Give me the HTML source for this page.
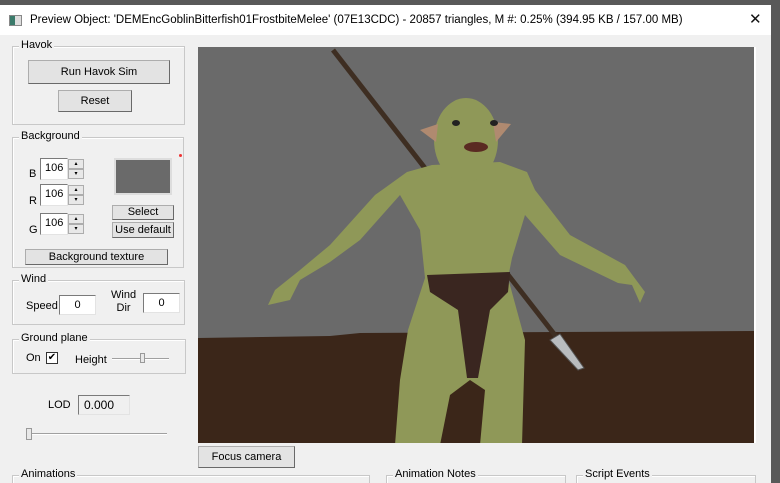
<!DOCTYPE html>
<html style="width:780px;height:483px;overflow:hidden"><head><style>
*{margin:0;padding:0;box-sizing:border-box}
body{width:780px;height:483px;background:#595959;overflow:hidden;font-family:"Liberation Sans",Tahoma,sans-serif;font-size:11px;color:#000;position:relative}
.win{position:absolute;left:0;top:5px;width:771px;height:478px;background:#f0f0f0;overflow:hidden}
.title{position:absolute;left:0;top:0;width:771px;height:30px;background:#fff;font-size:11.5px}
.title span{position:absolute;left:30px;top:9px;white-space:nowrap}
.ico{position:absolute;left:9px;top:10px;width:13px;height:11px;border:1px solid #888;background:linear-gradient(90deg,#3a7a6a 0 5px,#ddd 5px)}
.x{position:absolute;left:749px;top:5px;font-size:15px;color:#111;font-family:"DejaVu Sans",sans-serif}
.a{position:absolute}
.grp{position:absolute;border:1px solid #c8c8c8;box-shadow:inset 1px 1px #fff}
.lg{position:absolute;top:-8px;left:6px;background:#f0f0f0;padding:0 2px;font-size:11px}
.btn{position:absolute;background:#e3e3e3;border:1px solid #adadad;border-right-color:#696969;border-bottom-color:#696969;text-align:center;font-size:11px;line-height:20px}
.ed{position:absolute;background:#fff;border:1px solid #7a7a7a;border-right-color:#e3e3e3;border-bottom-color:#e3e3e3;font-size:11px}
.spin{position:absolute;width:16px;height:20px}
.spin div{height:10px;border:1px solid #adadad;background:#e8e8e8;font-size:6px;line-height:8px;text-align:center}
</style></head><body>
<div class="win">
<div class="title"><div class="ico"></div><span>Preview Object: 'DEMEncGoblinBitterfish01FrostbiteMelee' (07E13CDC) - 20857 triangles, M #: 0.25% (394.95 KB / 157.00 MB)</span><div class="x">✕</div></div>

<div class="grp" style="left:12px;top:41px;width:173px;height:79px"><div class="lg">Havok</div>
<div class="btn" style="left:15px;top:13px;width:142px;height:24px;line-height:22px">Run Havok Sim</div>
<div class="btn" style="left:45px;top:43px;width:74px;height:22px">Reset</div></div>

<div class="grp" style="left:12px;top:132px;width:172px;height:131px"><div class="lg">Background</div>
<div class="a" style="left:16px;top:30px">B</div><div class="a" style="left:16px;top:57px">R</div><div class="a" style="left:16px;top:86px">G</div>
<div class="ed" style="left:27px;top:20px;width:28px;height:22px;padding:3px 0 0 4px">106</div><div class="spin" style="left:55px;top:21px"><div>▴</div><div>▾</div></div>
<div class="ed" style="left:27px;top:46px;width:28px;height:22px;padding:3px 0 0 4px">106</div><div class="spin" style="left:55px;top:47px"><div>▴</div><div>▾</div></div>
<div class="ed" style="left:27px;top:75px;width:28px;height:22px;padding:3px 0 0 4px">106</div><div class="spin" style="left:55px;top:76px"><div>▴</div><div>▾</div></div>
<div class="a" style="left:101px;top:20px;width:58px;height:37px;background:#6a6a6a;border:2px solid #ddd"></div>
<div class="a" style="left:166px;top:16px;width:3px;height:3px;background:#e33;border-radius:2px"></div>
<div class="btn" style="left:99px;top:67px;width:62px;height:15px;line-height:13px">Select</div>
<div class="btn" style="left:99px;top:84px;width:62px;height:16px;line-height:14px">Use default</div>
<div class="btn" style="left:12px;top:111px;width:143px;height:16px;line-height:14px">Background texture</div></div>

<div class="grp" style="left:12px;top:275px;width:173px;height:45px"><div class="lg">Wind</div>
<div class="a" style="left:13px;top:19px">Speed</div>
<div class="ed" style="left:46px;top:14px;width:37px;height:20px;text-align:center;line-height:18px">0</div>
<div class="a" style="left:98px;top:8px;text-align:center;line-height:13px">Wind<br>Dir</div>
<div class="ed" style="left:130px;top:12px;width:37px;height:20px;text-align:center;line-height:18px">0</div></div>

<div class="grp" style="left:12px;top:334px;width:174px;height:35px"><div class="lg">Ground plane</div>
<div class="a" style="left:13px;top:12px">On</div>
<div class="a" style="left:33px;top:12px;width:12px;height:12px;border:1px solid #333;background:#fff;font-size:10px;line-height:10px;text-align:center">✔</div>
<div class="a" style="left:62px;top:14px">Height</div>
<div class="a" style="left:99px;top:18px;width:57px;height:2px;border-top:1px solid #a0a0a0;border-bottom:1px solid #fff"></div>
<div class="a" style="left:127px;top:13px;width:5px;height:10px;background:#e8e8e8;border:1px solid #999"></div></div>

<div class="a" style="left:48px;top:394px">LOD</div>
<div class="ed" style="left:78px;top:390px;width:52px;height:20px;background:#f0f0f0;padding:2px 0 0 5px;font-size:12px">0.000</div>
<div class="a" style="left:27px;top:428px;width:140px;height:2px;border-top:1px solid #a0a0a0;border-bottom:1px solid #fff"></div>
<div class="a" style="left:26px;top:423px;width:6px;height:12px;background:#e8e8e8;border:1px solid #999"></div>

<div class="a" style="left:198px;top:42px;width:558px;height:396px;overflow:hidden;border-right:2px solid #fff">
<svg width="558" height="396" viewBox="198 47 558 396">
<rect x="198" y="47" width="560" height="400" fill="#6a6a6a"/>
<polygon points="198,338 330,336 360,333 756,331 756,445 198,445" fill="#3b2619"/>
<line x1="333" y1="50" x2="565" y2="348" stroke="#3e2e22" stroke-width="5"/>
<polygon points="550,340 560,334 584,368 578,370" fill="#b9bcbf" stroke="#555" stroke-width="1"/>
<g fill="#8f9858">
<polygon points="407,172 432,165 500,162 527,172 535,190 570,235 625,265 645,292 640,303 632,285 618,283 560,255 525,215 512,258 508,278 525,340 522,445 480,445 485,390 470,380 450,395 440,445 395,445 400,380 408,330 425,278 420,230 400,195 360,240 330,262 300,280 290,300 268,305 275,290 300,270 330,245 375,195"/>
<ellipse cx="466" cy="140" rx="32" ry="42"/>
</g>
<polygon points="420,130 438,124 436,142" fill="#b08a70"/>
<polygon points="511,124 493,122 496,142" fill="#b08a70"/>
<ellipse cx="456" cy="123" rx="4" ry="3" fill="#222"/><ellipse cx="494" cy="123" rx="4" ry="3" fill="#222"/>
<ellipse cx="476" cy="147" rx="12" ry="5" fill="#5a2a22"/>
<polygon points="427,275 510,272 508,292 490,310 478,378 467,378 458,310 430,292" fill="#3a2620"/>
</svg></div>

<div class="btn" style="left:198px;top:441px;width:97px;height:22px">Focus camera</div>

<div class="grp" style="left:12px;top:470px;width:358px;height:20px"><div class="lg">Animations</div></div>
<div class="grp" style="left:386px;top:470px;width:180px;height:20px"><div class="lg">Animation Notes</div></div>
<div class="grp" style="left:576px;top:470px;width:180px;height:20px"><div class="lg">Script Events</div></div>
</div>
</body></html>
